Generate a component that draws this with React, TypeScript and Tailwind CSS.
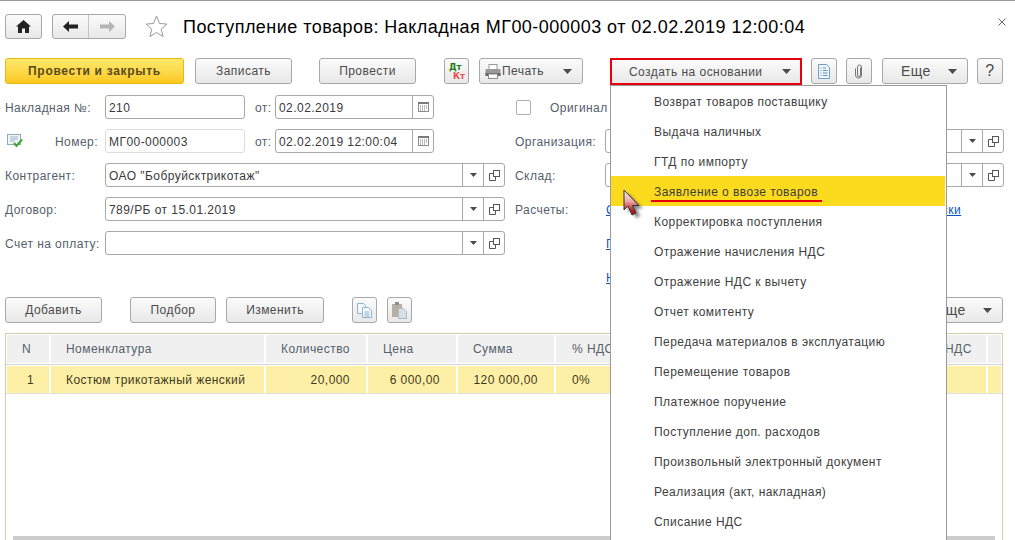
import React from "react";

const Arrow = ({ small }: { small?: boolean }) => (
  <svg width={small ? 7 : 9} height={small ? 4 : 5} viewBox="0 0 9 5" className="shrink-0">
    <path d="M0 0h9L4.5 5z" fill="#4a4a4a" />
  </svg>
);

const Btn = ({ w, children, className = "" }: { w: string; children?: React.ReactNode; className?: string }) => (
  <div className={`${w} h-[26px] shrink-0 flex items-center justify-center rounded-[3px] border border-[#a8a8a8] bg-gradient-to-b from-[#fbfbfb] to-[#e8e8e8] text-[#4b4b4b] ${className}`}>
    {children}
  </div>
);

const CalIcon = () => (
  <svg width="11" height="10" viewBox="0 0 11 10">
    <rect x=".5" y=".5" width="10" height="9" fill="#fff" stroke="#8a8a8a" />
    <rect x="0" y="0" width="11" height="2" fill="#7a7a7a" />
    <path d="M2 4h1M4 4h1M6 4h1M8 4h1M2 6h1M4 6h1M6 6h1M8 6h1M2 8h1M4 8h1M6 8h1" stroke="#777" />
  </svg>
);

const OpenIcon = () => (
  <svg width="11" height="11" viewBox="0 0 11 11" fill="none" stroke="#555">
    <rect x="4.5" y=".5" width="6" height="6" />
    <path d="M4.500 3.500h-4v7h6v-4" />
  </svg>
);

const Field = ({ w, children, light }: { w: string; children?: React.ReactNode; light?: boolean }) => (
  <div className={`${w} h-6 shrink-0 flex items-center rounded-[3px] border ${light ? "border-[#dcdcdc]" : "border-[#a8a8a8]"} bg-white pl-[3px] pt-[2px] text-[#3a3a3a]`}>
    <span className="flex-1 whitespace-nowrap">{children}</span>
  </div>
);

const DateField = ({ value }: { value: string }) => (
  <div className="w-[159px] h-6 shrink-0 flex items-center rounded-[3px] border border-[#a8a8a8] bg-white text-[#3a3a3a]">
    <span className="flex-1 pl-[3px] pt-[2px] whitespace-nowrap">{value}</span>
    <div className="w-[21px] h-full flex items-center justify-center border-l border-[#a8a8a8]"><CalIcon /></div>
  </div>
);

const RefField = ({ w, value }: { w: string; value?: string }) => (
  <div className={`${w} h-6 shrink-0 flex items-center rounded-[3px] border border-[#a8a8a8] bg-white text-[#3a3a3a]`}>
    <span className="flex-1 pl-[3px] pt-[2px] whitespace-nowrap">{value}</span>
    <div className="w-[21px] h-full flex items-center justify-center border-l border-[#a8a8a8]"><Arrow small /></div>
    <div className="w-[21px] h-full flex items-center justify-center border-l border-[#a8a8a8]"><OpenIcon /></div>
  </div>
);

const Label = ({ w, children, className = "" }: { w: string; children: React.ReactNode; className?: string }) => (
  <div className={`${w} shrink-0 whitespace-nowrap pt-[2px] text-[#55606a] ${className}`}>{children}</div>
);

const menu = [
  "Возврат товаров поставщику",
  "Выдача наличных",
  "ГТД по импорту",
  "Заявление о ввозе товаров",
  "Корректировка поступления",
  "Отражение начисления НДС",
  "Отражение НДС к вычету",
  "Отчет комитенту",
  "Передача материалов в эксплуатацию",
  "Перемещение товаров",
  "Платежное поручение",
  "Поступление доп. расходов",
  "Произвольный электронный документ",
  "Реализация (акт, накладная)",
  "Списание НДС",
];

const cols = [
  { w: "w-[44px]", h: "N", v: "1", hc: "pl-[15px]", vc: "justify-end pr-[15px] bg-[#fcdb1e]" },
  { w: "w-[215px]", h: "Номенклатура", v: "Костюм трикотажный женский", hc: "pl-[15px]", vc: "pl-[15px]" },
  { w: "w-[102px]", h: "Количество", v: "20,000", hc: "pl-[15px]", vc: "justify-end pr-[16px]" },
  { w: "w-[90px]", h: "Цена", v: "6 000,00", hc: "pl-[15px]", vc: "justify-end pr-[16px]" },
  { w: "w-[98px]", h: "Сумма", v: "120 000,00", hc: "pl-[15px]", vc: "justify-end pr-[16px]" },
  { w: "w-[374px]", h: "% НДС", v: "0%", hc: "pl-[16px]", vc: "pl-[16px]" },
  { w: "w-[58px]", h: "НДС", v: "", hc: "pl-[15px]", vc: "" },
  { w: "w-[15px]", h: "", v: "", hc: "", vc: "" },
];

export default function App() {
  return (
    <div className="relative w-[1015px] h-[540px] overflow-hidden bg-white border-t border-[#999] flex flex-col text-[12px] leading-none font-['Liberation_Sans',Arial,sans-serif] tracking-[0.45px]">
      {/* header */}
      <div className="flex items-center h-[26px] mt-3 pl-[5px] pr-[9px] shrink-0">
        <div className="w-[37px] h-[25px] flex items-center justify-center rounded-[3px] border border-[#a8a8a8] bg-gradient-to-b from-[#fbfbfb] to-[#e8e8e8]">
          <svg width="15" height="13" viewBox="0 0 15 13"><path d="M7.500 0L15 6.500h-2V13H9V8.500H6V13H2V6.500H0z" fill="#222" /></svg>
        </div>
        <div className="ml-[10px] w-[74px] h-[25px] flex rounded-[3px] border border-[#a8a8a8] bg-gradient-to-b from-[#fbfbfb] to-[#e8e8e8]">
          <div className="w-[36px] flex items-center justify-center border-r border-[#c4c4c4]">
            <svg width="15" height="11" viewBox="0 0 15 11"><path d="M0 5.500L6 0v3.500h9v4H6V11z" fill="#222" /></svg>
          </div>
          <div className="flex-1 flex items-center justify-center">
            <svg width="15" height="11" viewBox="0 0 15 11"><path d="M15 5.500L9 0v3.500H0v4h9V11z" fill="#b5b5b5" /></svg>
          </div>
        </div>
        <svg className="ml-[19px]" width="23" height="22" viewBox="0 0 23 22"><path d="M11.500 1l3 7.500 7.500.6-5.800 5 1.900 7.400-6.600-4-6.600 4 1.900-7.400L1 9.100l7.500-.6z" fill="none" stroke="#9a9a9a" /></svg>
        <div className="ml-[15px] mt-[2px] text-[18px] text-black tracking-[0.46px] whitespace-nowrap">Поступление товаров: Накладная МГ00-000003 от 02.02.2019 12:00:04</div>
        <svg className="ml-auto mb-2" width="8" height="8" viewBox="0 0 8 8"><path d="M.5.500l7 7M7.500.500l-7 7" stroke="#666" /></svg>
      </div>

      {/* toolbar */}
      <div className="flex items-start mt-[19px] pl-[5px] shrink-0">
        <div className="w-[179px] h-[26px] flex items-center justify-center rounded-[3px] border border-[#e8b90e] bg-gradient-to-b from-[#fde96a] to-[#fbc91b] font-bold tracking-[0.7px] text-[#5a4a1a]">Провести и закрыть</div>
        <Btn w="w-[97px]" className="ml-[11px]">Записать</Btn>
        <Btn w="w-[97px]" className="ml-[27px]">Провести</Btn>
        <Btn w="w-[25px]" className="ml-[28px] relative">
          <span className="absolute left-[4px] top-[4px] text-[8.5px] font-bold tracking-normal text-[#1d7d12] font-['DejaVu_Sans',sans-serif]">Дт</span>
          <span className="absolute left-[8px] top-[13px] text-[8.5px] font-bold tracking-normal text-[#f04a4a] font-['DejaVu_Sans',sans-serif]">Кт</span>
        </Btn>
        <Btn w="w-[104px]" className="ml-[10px] !justify-start pl-[5px]">
          <svg width="16" height="15" viewBox="0 0 16 15">
            <rect x="4" y="0.500" width="8" height="5" fill="#fff" stroke="#999" />
            <rect x="0.500" y="5" width="15" height="6.500" rx="1" fill="#9a9a9a" />
            <rect x="0.500" y="9" width="15" height="3" fill="#666" />
            <rect x="3.500" y="10" width="9" height="4.500" fill="#fff" stroke="#8a8a8a" />
          </svg>
          <span className="ml-[1px]">Печать</span>
          <span className="ml-auto mr-[10px]"><Arrow /></span>
        </Btn>
        <div className="ml-[27px] w-[192px] h-[27px] flex items-center border-2 border-[#e8000c] bg-gradient-to-b from-[#fbfbfb] to-[#e8e8e8] text-[#4b4b4b] pl-[17px] pr-2">
          <span>Создать на основании</span>
          <span className="ml-auto mr-[1px]"><Arrow /></span>
        </div>
        <Btn w="w-[26px]" className="ml-[9px]">
          <svg width="12" height="15" viewBox="0 0 12 15">
            <path d="M.5.500h8l3 3v11H.5z" fill="#eef5fb" stroke="#6f9fc2" />
            <path d="M2.500 4h1M5 4h3M2.500 6.500h1M5 6.500h4.500M2.500 9h1M5 9h4.500M2.500 11.500h1M5 11.500h4.500" stroke="#5f93b8" />
          </svg>
        </Btn>
        <Btn w="w-[26px]" className="ml-[9px]">
          <svg width="8" height="15" viewBox="0 0 8 15" fill="none" stroke="#777">
            <path d="M5.500 3.500v7.500a1.500 1.500 0 0 1-3 0V3a2 2 0 0 1 4 0v8a3 3 0 0 1-6 0V4.500" />
          </svg>
        </Btn>
        <Btn w="w-[86px]" className="ml-[10px] !justify-start pl-[18px] text-[14px]">
          <span>Еще</span>
          <span className="ml-auto mr-[10px]"><Arrow /></span>
        </Btn>
        <Btn w="w-[26px]" className="ml-[9px] text-[16px]">?</Btn>
      </div>

      {/* form */}
      <div className="flex mt-[10px] pl-[5px] shrink-0">
        <div className="w-[510px] shrink-0 flex flex-col gap-[10px]">
          <div className="flex items-center">
            <Label w="w-[100px]">Накладная №:</Label>
            <Field w="w-[140px]">210</Field>
            <Label w="w-[30px]" className="pl-[10px]">от:</Label>
            <DateField value="02.02.2019" />
          </div>
          <div className="flex items-center">
            <div className="w-[50px] shrink-0 pl-[2px]">
              <svg width="16" height="14" viewBox="0 0 16 14">
                <rect x=".5" y=".5" width="13" height="10" fill="#eef5fb" stroke="#8fa9bd" />
                <path d="M3 3h8M3 5h8M3 7h5" stroke="#9db6c8" />
                <path d="M7 9l2.500 3L15 5.500" fill="none" stroke="#3fa535" strokeWidth="2" />
              </svg>
            </div>
            <Label w="w-[50px]">Номер:</Label>
            <Field w="w-[140px]" light>МГ00-000003</Field>
            <Label w="w-[30px]" className="pl-[10px]">от:</Label>
            <DateField value="02.02.2019 12:00:04" />
          </div>
          <div className="flex items-center">
            <Label w="w-[100px]">Контрагент:</Label>
            <RefField w="w-[400px]" value={'ОАО "Бобруйсктрикотаж"'} />
          </div>
          <div className="flex items-center">
            <Label w="w-[100px]">Договор:</Label>
            <RefField w="w-[400px]" value="789/РБ от 15.01.2019" />
          </div>
          <div className="flex items-center">
            <Label w="w-[100px]">Счет на оплату:</Label>
            <RefField w="w-[400px]" />
          </div>
          <div className="h-6" />
        </div>
        <div className="flex-1 flex flex-col gap-[10px]">
          <div className="flex items-center h-6">
            <div className="w-[15px] h-[15px] ml-[1px] rounded-[2px] border border-[#b0b0b0] bg-white" />
            <Label w="w-[60px]" className="ml-[19px]">Оригинал</Label>
          </div>
          <div className="flex items-center">
            <Label w="w-[90px]">Организация:</Label>
            <RefField w="w-[399px]" />
          </div>
          <div className="flex items-center">
            <Label w="w-[90px]">Склад:</Label>
            <RefField w="w-[399px]" />
          </div>
          <div className="flex items-center h-6">
            <Label w="w-[91px]">Расчеты:</Label>
            <span className="pt-[2px] text-[#0b57b5] underline whitespace-nowrap tracking-[0.5px]">Срок 02.02.2019, по договору, зачет аванса автоматически</span>
          </div>
          <div className="flex items-center h-6 pl-[91px]">
            <span className="pt-[2px] text-[#0b57b5] underline">П</span>
          </div>
          <div className="flex items-center h-6 pl-[91px]">
            <span className="pt-[2px] text-[#0b57b5] underline">Н</span>
          </div>
        </div>
      </div>

      {/* table toolbar */}
      <div className="flex items-center mt-2 pl-[5px] shrink-0">
        <Btn w="w-[97px]">Добавить</Btn>
        <Btn w="w-[86px]" className="ml-[28px]">Подбор</Btn>
        <Btn w="w-[98px]" className="ml-[10px]">Изменить</Btn>
        <Btn w="w-[25px]" className="ml-[28px]">
          <svg width="15" height="15" viewBox="0 0 15 15" fill="#f3f8fc" stroke="#8fb3cc">
            <path d="M.5.500h6l2 2v8h-8z" />
            <path d="M5.500 4.500h6l3 3v7h-9z" />
            <path d="M7.500 9h5M7.500 11h5M7.500 13h5" />
          </svg>
        </Btn>
        <Btn w="w-[25px]" className="ml-[10px]">
          <svg width="15" height="17" viewBox="0 0 15 17">
            <rect x="0" y="2" width="10" height="13" fill="#b8aea3" />
            <rect x="3" y="0" width="4" height="3" fill="#8d8d8d" />
            <path d="M6.500 6.500h5l3 3v7h-8z" fill="#d5e0e8" stroke="#a9bcc9" />
          </svg>
        </Btn>
        <Btn w="w-[86px]" className="ml-auto mr-[12px] !justify-start pl-[18px] text-[14px]">
          <span>Еще</span>
          <span className="ml-auto mr-[10px]"><Arrow /></span>
        </Btn>
      </div>

      {/* table */}
      <div className="mt-[10px] ml-[5px] w-[998px] flex-1 min-h-0 flex flex-col justify-between border-x border-t border-[#d6cba8]">
        <div>
          <div className="flex h-[31px] border-b border-[#d4d4d4]">
            {cols.map((c, i) => (
              <div key={i} className={`${c.w} shrink-0 flex items-center bg-[#f0f0f0] border border-white text-[#55606a] ${c.hc}`}>{c.h}</div>
            ))}
          </div>
          <div className="flex h-[29px] border-b border-[#e2e2e2]">
            {cols.map((c, i) => (
              <div key={i} className={`${c.w} shrink-0 flex items-center bg-[#fdf0a6] border-x border-t border-white text-[#3f3a22] ${c.vc}`}>{c.v}</div>
            ))}
          </div>
        </div>
        <div className="h-[4px] ml-[7px] mr-[7px] bg-[#cccccc]" />
      </div>

      {/* dropdown overlay */}
      <div className="absolute left-[610px] top-[84px] w-[337px] h-[470px] bg-white border border-[#9a9a9a] text-[#3e3e3e]">
        {menu.map((m, i) => (
          <div key={m} className={`relative h-[30px] flex items-center pl-[43px] pt-[2px] whitespace-nowrap ${i === 3 ? "bg-[#fcdb1e] mr-[1px]" : ""}`}>
            {m}
            {i === 3 && <div className="absolute left-[40px] top-[24px] w-[171px] h-[2px] bg-[#e8000c]" />}
          </div>
        ))}
      </div>

      {/* cursor */}
      <svg className="absolute left-[621px] top-[186px]" width="28" height="34" viewBox="0 0 28 34">
        <defs>
          <linearGradient id="cur" x1="0" y1="0" x2="0" y2="1">
            <stop offset="0" stopColor="#f6f6f6" />
            <stop offset="0.45" stopColor="#eda6a6" />
            <stop offset="0.85" stopColor="#b01820" />
          </linearGradient>
          <filter id="sh" x="-30%" y="-30%" width="170%" height="170%">
            <feGaussianBlur stdDeviation="1.6" />
          </filter>
        </defs>
        <path d="M3 3v20l4-4 4 9 4-2-3.500-7.500H18z" fill="#444" opacity="0.65" filter="url(#sh)" transform="translate(4 3)" />
        <path d="M3 3v20l4-4 4 9 4-2-3.500-7.500H18z" fill="url(#cur)" stroke="#333" strokeWidth="1" />
      </svg>
    </div>
  );
}
